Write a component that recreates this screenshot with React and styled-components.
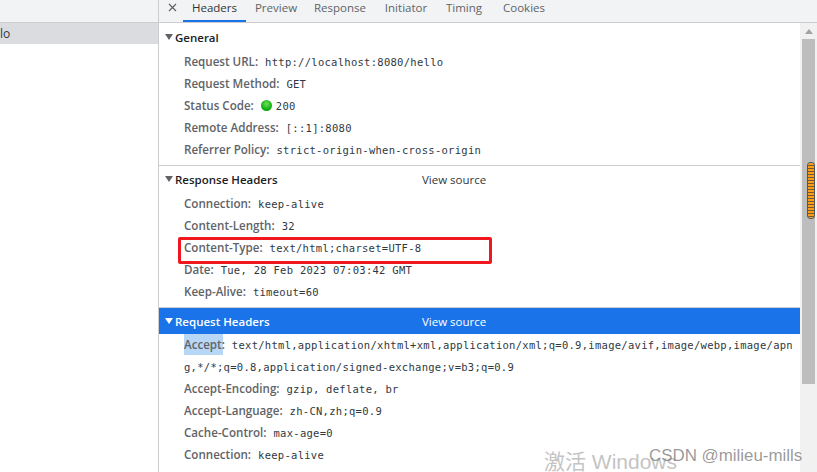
import React from "react";
import styled, { createGlobalStyle } from "styled-components";

const Global = createGlobalStyle`
  html, body {
    margin: 0;
    padding: 0;
    background: #fff;
    overflow: hidden;
  }
`;

const Page = styled.div`
  position: relative;
  display: flex;
  width: 817px;
  height: 472px;
  overflow: hidden;
  background: #fff;
  font-family: "Open Sans", "Noto Sans", sans-serif;
  font-size: 11.6px;
  color: #303942;
`;

const NamePane = styled.div`
  width: 158px;
  flex: none;
  border-right: 1px solid #cdcdcd;
`;

const NameHead = styled.div`
  height: 22px;
  background: #f1f3f4;
  border-bottom: 1px solid #cdcdcd;
`;

const NameRow = styled.div`
  height: 21px;
  line-height: 22px;
  background: #dadce0;
  font-size: 12px;
  color: #303942;
`;

const DetailPane = styled.div`
  flex: 1;
  min-width: 0;
  display: flex;
  flex-direction: column;
`;

const Tabs = styled.div`
  height: 22px;
  flex: none;
  display: flex;
  background: #f1f3f4;
  border-bottom: 1px solid #cdcdcd;
`;

const CloseBtn = styled.div`
  width: 24px;
  display: flex;
  align-items: center;
  justify-content: center;
  color: #5f6368;
  padding: 0 0 8px 2px;
  box-sizing: border-box;
`;

const Tab = styled.div`
  width: ${(p) => p.$w}px;
  height: 20px;
  line-height: 16px;
  font-size: 11.5px;
  text-align: center;
  color: ${(p) => (p.$active ? "#333" : "#5f6368")};
  border-bottom: 2px solid ${(p) => (p.$active ? "#1a73e8" : "transparent")};
`;

const Body = styled.div`
  flex: 1;
  min-height: 0;
  display: flex;
`;

const Sections = styled.div`
  flex: 1;
  min-width: 0;
  padding-top: 1px;
`;

const Section = styled.div`
  padding-bottom: 4px;
  border-bottom: ${(p) => (p.$last ? "none" : "1px solid #cdcdcd")};
`;

const Title = styled.div`
  height: 26px;
  margin-bottom: ${(p) => (p.$selected ? 0 : 1)}px;
  display: flex;
  align-items: center;
  padding-left: 6px;
  font-weight: 600;
  font-size: 11.5px;
  background: ${(p) => (p.$selected ? "#1a73e8" : "transparent")};
  color: ${(p) => (p.$selected ? "#fff" : "#202124")};
`;

const Arrow = styled.span`
  width: 0;
  height: 0;
  margin-right: 2px;
  border-left: 4px solid transparent;
  border-right: 4px solid transparent;
  border-top: 6px solid ${(p) => (p.$selected ? "#fff" : "#5f6368")};
`;

const TitleText = styled.span`
  width: 247px;
  flex: none;
`;

const ViewSource = styled.span`
  font-weight: 400;
  color: ${(p) => (p.$selected ? "#fff" : "#303942")};
`;

const Row = styled.div`
  height: ${(p) => (p.$wrap ? 44 : 22)}px;
  padding: 0 3px 0 25px;
  line-height: 22px;
  word-break: break-all;
`;

const Key = styled.span`
  font-weight: 600;
  color: #5f6368;
  margin-right: 7px;
  padding: 3px 0;
  line-height: 1;
  background: ${(p) => (p.$highlight ? "linear-gradient(#b8d6f5, #b8d6f5) 0 0 / 39px 100% no-repeat" : "none")};
`;

const Value = styled.span`
  font-family: "DejaVu Sans Mono", "Liberation Mono", monospace;
  font-size: 10.5px;
  letter-spacing: 0.28px;
  line-height: 1;
  color: #303942;
`;

const StatusDot = styled.span`
  display: inline-block;
  width: 11px;
  height: 11px;
  margin-right: 4px;
  vertical-align: -1px;
  border-radius: 50%;
  background: radial-gradient(circle at 50% 35%, #6fe05a, #12b012 60%, #0a8a0a);
`;

const ScrollTrack = styled.div`
  width: 17px;
  flex: none;
  display: flex;
  flex-direction: column;
  align-items: center;
  background: #f1f1f1;
`;

const ScrollUp = styled.div`
  width: 0;
  height: 0;
  margin: 6px 0 5px;
  border-left: 4px solid transparent;
  border-right: 4px solid transparent;
  border-bottom: 5px solid #a3a3a3;
`;

const ScrollThumb = styled.div`
  position: relative;
  width: 13px;
  height: 345px;
  background: #bdbdbd;
`;

const ScrollMark = styled.div`
  position: absolute;
  left: 6px;
  top: 124px;
  width: 6px;
  height: 55px;
  border-radius: 3px;
  background: repeating-linear-gradient(#ff9d14 0 2px, #6b5a3a 2px 3px);
  box-shadow: 0 0 0 1px #555;
`;

const RedBox = styled.div`
  position: absolute;
  left: 178px;
  top: 237px;
  width: 314px;
  height: 27px;
  box-sizing: border-box;
  border: 3px solid #f0171f;
  border-radius: 2px;
`;

const WinMark = styled.div`
  position: absolute;
  left: 544px;
  top: 447px;
  font-family: "Liberation Sans", "Noto Sans CJK SC", sans-serif;
  font-size: 21px;
  line-height: 30px;
  color: #c4c4c4;
  white-space: nowrap;
`;

const CsdnMark = styled.div`
  position: absolute;
  left: 649px;
  top: 447px;
  font-family: "Liberation Sans", sans-serif;
  font-size: 16.9px;
  line-height: 18px;
  color: rgba(120, 120, 120, 0.75);
  white-space: nowrap;
`;

const tabs = [
  ["Headers", 63, true],
  ["Preview", 60],
  ["Response", 68],
  ["Initiator", 64],
  ["Timing", 52],
  ["Cookies", 68],
];

const general = [
  ["Request URL:", "http://localhost:8080/hello"],
  ["Request Method:", "GET"],
  ["Status Code:", "200", true],
  ["Remote Address:", "[::1]:8080"],
  ["Referrer Policy:", "strict-origin-when-cross-origin"],
];

const response = [
  ["Connection:", "keep-alive"],
  ["Content-Length:", "32"],
  ["Content-Type:", "text/html;charset=UTF-8"],
  ["Date:", "Tue, 28 Feb 2023 07:03:42 GMT"],
  ["Keep-Alive:", "timeout=60"],
];

const request = [
  ["Accept:", "text/html,application/xhtml+xml,application/xml;q=0.9,image/avif,image/webp,image/apng,*/*;q=0.8,application/signed-exchange;v=b3;q=0.9"],
  ["Accept-Encoding:", "gzip, deflate, br"],
  ["Accept-Language:", "zh-CN,zh;q=0.9"],
  ["Cache-Control:", "max-age=0"],
  ["Connection:", "keep-alive"],
];

const Header = ({ name, value, dot, highlight }) => (
  <Row $wrap={highlight}>
    <Key $highlight={highlight}>{name}</Key>
    {dot && <StatusDot />}
    <Value>{value}</Value>
  </Row>
);

export default function App() {
  return (
    <Page>
      <Global />
      <NamePane>
        <NameHead />
        <NameRow>lo</NameRow>
      </NamePane>
      <DetailPane>
        <Tabs>
          <CloseBtn>
            <svg width="9" height="9" viewBox="0 0 9 9">
              <path d="M1 1l7 7M8 1L1 8" stroke="currentColor" strokeWidth="1.2" />
            </svg>
          </CloseBtn>
          {tabs.map(([label, w, active]) => (
            <Tab key={label} $w={w} $active={active}>{label}</Tab>
          ))}
        </Tabs>
        <Body>
          <Sections>
            <Section>
              <Title><Arrow /><TitleText>General</TitleText></Title>
              {general.map(([n, v, d]) => <Header key={n} name={n} value={v} dot={d} />)}
            </Section>
            <Section>
              <Title><Arrow /><TitleText>Response Headers</TitleText><ViewSource>View source</ViewSource></Title>
              {response.map(([n, v]) => <Header key={n} name={n} value={v} />)}
            </Section>
            <Section $last>
              <Title $selected><Arrow $selected /><TitleText>Request Headers</TitleText><ViewSource $selected>View source</ViewSource></Title>
              {request.map(([n, v], i) => <Header key={n} name={n} value={v} highlight={i === 0} />)}
            </Section>
          </Sections>
          <ScrollTrack>
            <ScrollUp />
            <ScrollThumb><ScrollMark /></ScrollThumb>
          </ScrollTrack>
        </Body>
      </DetailPane>
      <RedBox />
      <WinMark>激活 Windows</WinMark>
      <CsdnMark>CSDN @milieu-mills</CsdnMark>
    </Page>
  );
}
